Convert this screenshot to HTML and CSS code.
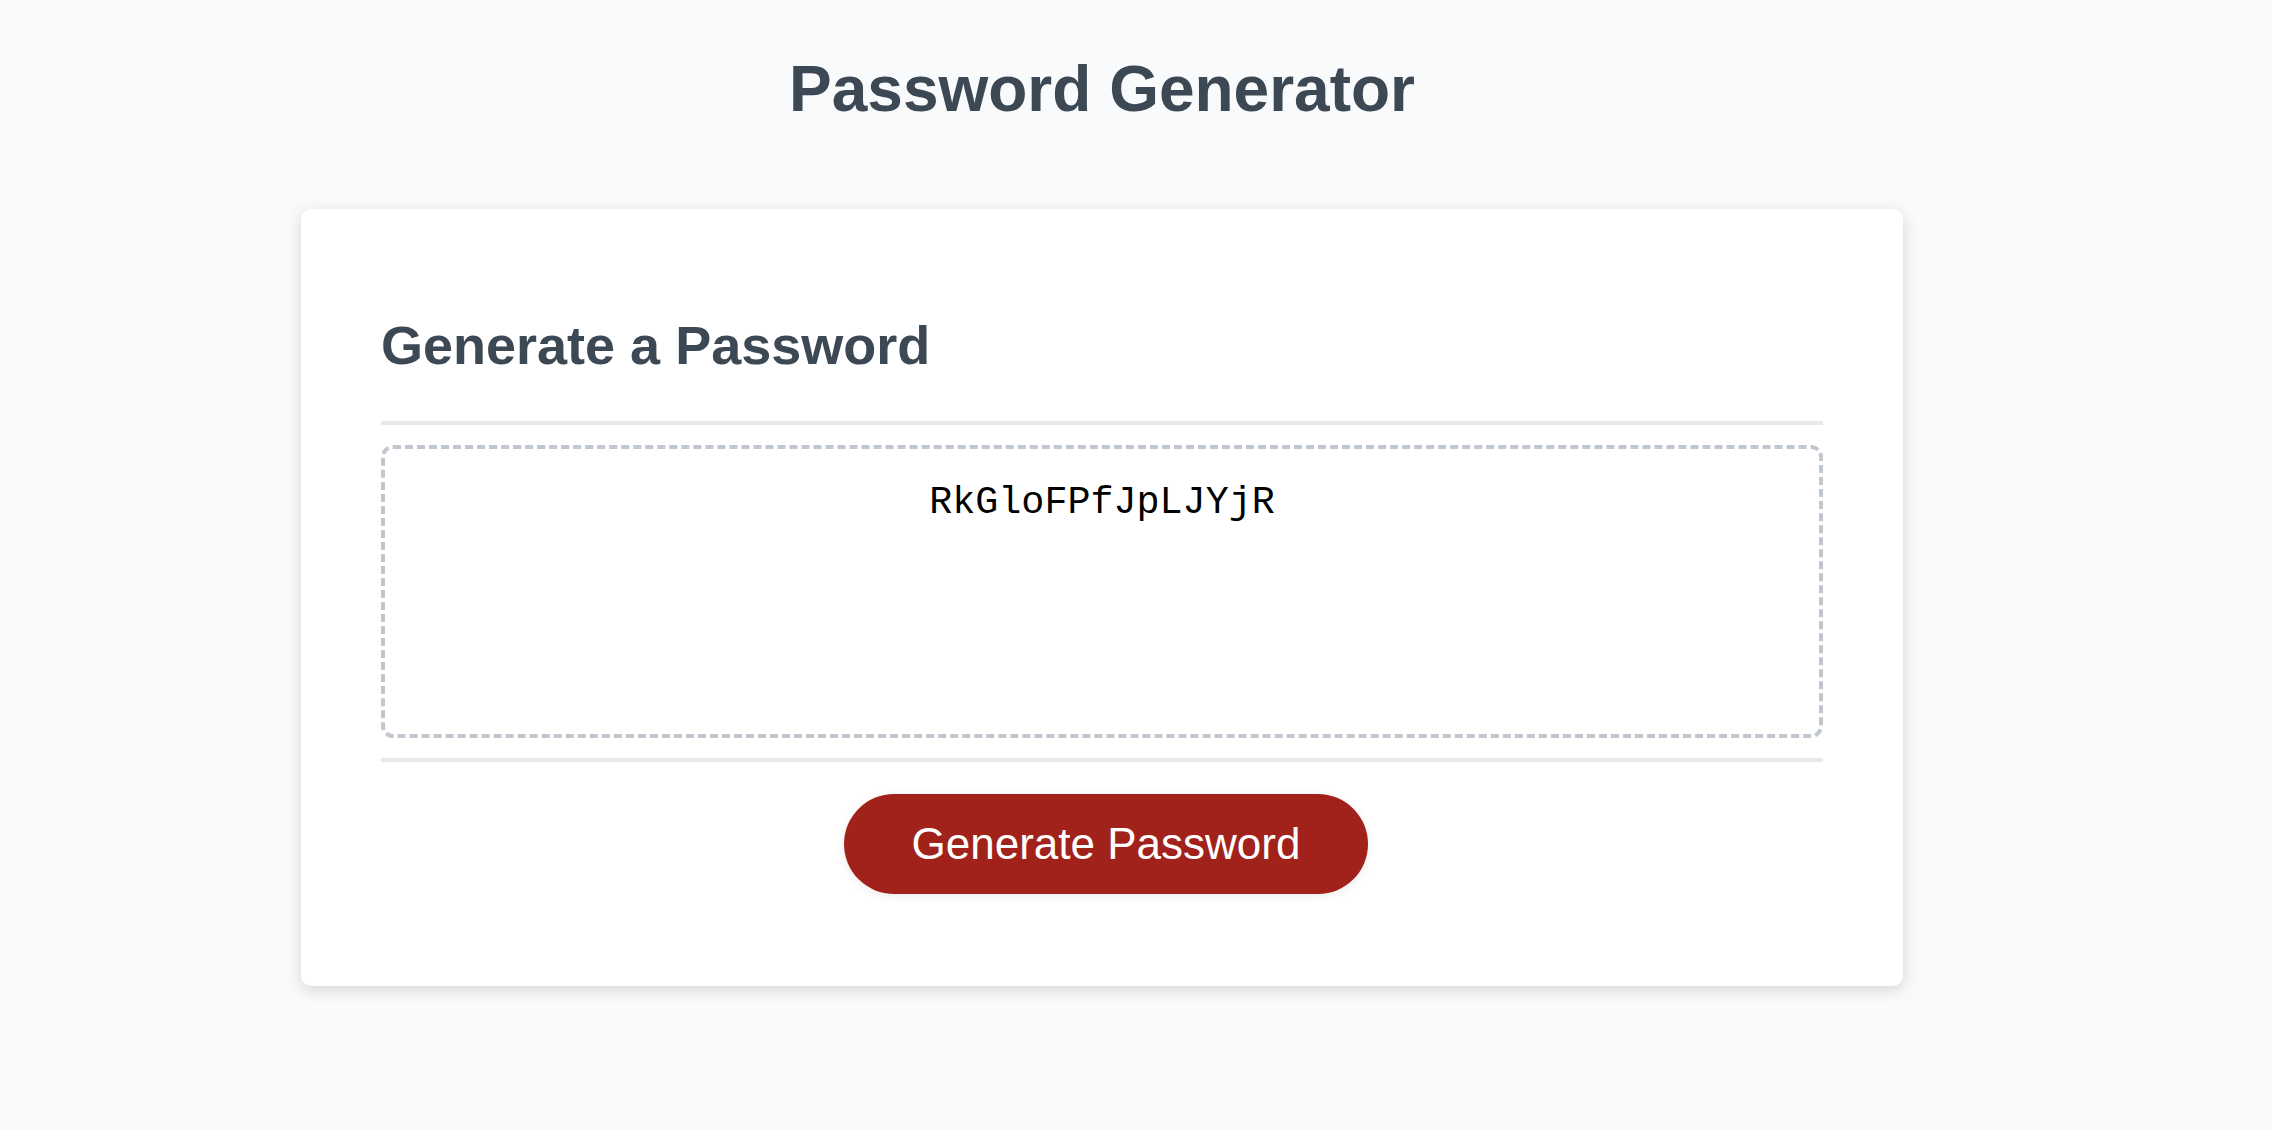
FILE: index.html
```html
<!DOCTYPE html>
<html lang="en">
<head>
<meta charset="UTF-8">
<title>Password Generator</title>
<link rel="stylesheet" href="styles.css">
</head>
<body>
<div class="wrapper">
  <header class="page-header">
    <h1 class="page-title">Password Generator</h1>
  </header>
  <div class="card">
    <div class="card-header">
      <h2 class="card-title">Generate a Password</h2>
    </div>
    <div class="card-body">
      <textarea readonly id="password" class="password-box" placeholder="Your Secure Password" aria-label="Generated Password">RkGloFPfJpLJYjR</textarea>
    </div>
    <div class="card-footer">
      <button id="generate" class="btn">Generate Password</button>
    </div>
  </div>
</div>
</body>
</html>
```

FILE: styles.css
```css
* {
  box-sizing: border-box;
}

html,
body {
  margin: 0;
  padding: 0;
  height: 100%;
}

body {
  background-color: #f9fafc;
  font-family: "Liberation Sans", Arial, Helvetica, sans-serif;
}

.wrapper {
  padding: 0 68px 0 0;
}

.page-header {
  text-align: center;
  padding: 52px 40px 83px;
  color: #3c4853;
}

.page-title {
  margin: 0;
  font-size: 64px;
  font-weight: 700;
  line-height: normal;
}

.card {
  background-color: #ffffff;
  border-radius: 10px;
  box-shadow: rgba(0, 0, 0, 0.15) 0 4px 16px 0;
  color: #3c4853;
  font-size: 36px;
  margin: 0 auto;
  max-width: 1602px;
  padding: 60px 80px;
}

.card-header::after {
  content: "";
  display: block;
  width: 100%;
  height: 4px;
  background: #e7e9eb;
}

.card-title {
  margin: 45px 0;
  font-size: 54px;
  font-weight: 700;
  line-height: normal;
}

.card-body {
  min-height: 200px;
}

.password-box {
  appearance: none;
  -webkit-appearance: none;
  display: block;
  width: 100%;
  height: 293px;
  margin: 20px 0;
  padding: 33px 30px 170px;
  font-family: "Liberation Mono", "Courier New", monospace;
  font-size: 38.4px;
  line-height: 43.5px;
  color: #000000;
  text-align: center;
  background: #ffffff;
  border: 4px dashed #c0c7cf;
  border-radius: 12px;
  resize: none;
  overflow: hidden;
  outline: none;
}

.card-footer {
  text-align: center;
}

.card-footer::before {
  content: "";
  display: block;
  width: 100%;
  height: 4px;
  background: #e7e9eb;
}

.btn {
  border: none;
  background-color: #a1221b;
  border-radius: 50px;
  box-shadow: rgba(0, 0, 0, 0.08) 0 2px 10px 0;
  color: #ffffff;
  display: inline-block;
  font-family: "Liberation Sans", Arial, Helvetica, sans-serif;
  font-size: 44px;
  line-height: 44px;
  margin: 32px 32px 32px 40px;
  padding: 28px 68px;
  text-align: center;
  cursor: pointer;
}
```
